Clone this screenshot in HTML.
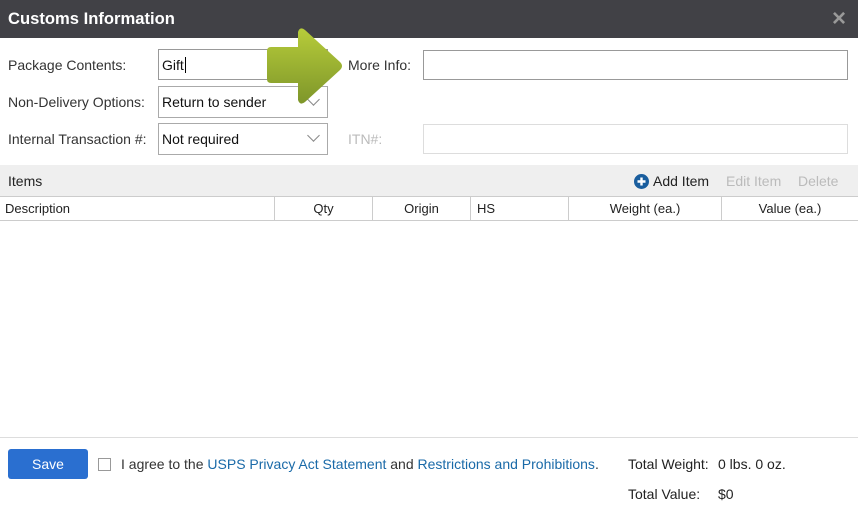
<!DOCTYPE html>
<html><head><style>
body{margin:0;width:858px;height:518px;position:relative;background:#fff;font-family:"Liberation Sans",Arial,sans-serif;font-size:14px;color:#333;overflow:hidden}
.a{position:absolute;white-space:nowrap}
.hdr{left:0;top:0;width:858px;height:38px;background:#414146}
.box{position:absolute;border:1px solid #aaa;box-sizing:border-box;background:#fff}
.lbl{position:absolute;line-height:16px}
.chev{position:absolute;width:8px;height:8px;border-right:1px solid #888;border-bottom:1px solid #888;transform:rotate(45deg)}
.th{position:absolute;top:197px;height:23px;line-height:23px;border-right:1px solid #ccc;box-sizing:border-box;font-size:13px;color:#222}
</style></head><body>
<div class="a hdr"></div>
<div class="a" style="left:8px;top:9px;color:#fff;font-weight:bold;font-size:16.6px">Customs Information</div>
<div class="a" style="left:832px;top:5px;color:#999;font-size:24px;font-weight:bold">×</div>

<div class="lbl" style="left:8px;top:57px">Package Contents:</div>
<div class="box" style="left:158px;top:49px;width:170px;height:31px;border-color:#999"></div>
<div class="lbl" style="left:162px;top:57px;color:#111">Gift<span style="border-left:1px solid #000;margin-left:1px"></span></div>

<div class="lbl" style="left:8px;top:94px">Non-Delivery Options:</div>
<div class="box" style="left:158px;top:86px;width:170px;height:32px"></div>
<div class="lbl" style="left:162px;top:94px;color:#111">Return to sender</div>
<div class="chev" style="left:309px;top:95px"></div>

<div class="lbl" style="left:8px;top:131px">Internal Transaction #:</div>
<div class="box" style="left:158px;top:123px;width:170px;height:32px"></div>
<div class="lbl" style="left:162px;top:131px;color:#111">Not required</div>
<div class="chev" style="left:309px;top:131px"></div>

<svg class="a" style="left:262px;top:26px" width="84" height="82" viewBox="0 0 84 82">
<defs><linearGradient id="g" x1="0" y1="0" x2="0" y2="1"><stop offset="0" stop-color="#b7cc3a"/><stop offset="1" stop-color="#7e962a"/></linearGradient></defs>
<path d="M9 21 L36 21 L36 6 Q38 0 43 4 L78 36 Q82 40 78 44 L43 76 Q38 80 36 74 L36 57 L9 57 Q5 57 5 53 L5 25 Q5 21 9 21 Z" fill="url(#g)"/>
</svg>

<div class="lbl" style="left:348px;top:57px">More Info:</div>
<div class="box" style="left:423px;top:50px;width:425px;height:30px;border-color:#999"></div>
<div class="lbl" style="left:348px;top:131px;color:#bbb">ITN#:</div>
<div class="box" style="left:423px;top:124px;width:425px;height:30px;border-color:#ddd"></div>

<div class="a" style="left:0;top:165px;width:858px;height:32px;background:#efefef;border-bottom:1px solid #ccc;box-sizing:border-box"></div>
<div class="lbl" style="left:8px;top:173px;color:#222">Items</div>
<svg class="a" style="left:634px;top:174px" width="15" height="15" viewBox="0 0 15 15"><circle cx="7.5" cy="7.5" r="7.5" fill="#1a5e9e"/><path d="M7.5 3.5v8M3.5 7.5h8" stroke="#fff" stroke-width="2.4"/></svg>
<div class="lbl" style="left:653px;top:173px;color:#222">Add Item</div>
<div class="lbl" style="left:726px;top:173px;color:#bbb">Edit Item</div>
<div class="lbl" style="left:798px;top:173px;color:#bbb">Delete</div>

<div class="a" style="left:0;top:220px;width:858px;border-top:1px solid #ccc"></div>
<div class="th" style="left:0;width:275px;padding-left:5px">Description</div>
<div class="th" style="left:275px;width:98px;text-align:center">Qty</div>
<div class="th" style="left:373px;width:98px;text-align:center">Origin</div>
<div class="th" style="left:471px;width:98px;padding-left:6px">HS</div>
<div class="th" style="left:569px;width:153px;text-align:center">Weight (ea.)</div>
<div class="th" style="left:722px;width:136px;text-align:center;border-right:none">Value (ea.)</div>

<div class="a" style="left:0;top:437px;width:858px;border-top:1px solid #ddd"></div>
<div class="a" style="left:8px;top:449px;width:80px;height:30px;background:#2a6fd0;border-radius:3px;color:#fff;text-align:center;line-height:30px">Save</div>
<div class="a" style="left:98px;top:458px;width:11px;height:11px;border:1px solid #999"></div>
<div class="lbl" style="left:121px;top:456px">I agree to the <span style="color:#1a6aa8">USPS Privacy Act Statement</span> and <span style="color:#1a6aa8">Restrictions and Prohibitions</span>.</div>
<div class="lbl" style="left:628px;top:456px;color:#222">Total Weight:</div>
<div class="lbl" style="left:718px;top:456px;color:#222">0 lbs. 0 oz.</div>
<div class="lbl" style="left:628px;top:486px;color:#222">Total Value:</div>
<div class="lbl" style="left:718px;top:486px;color:#222">$0</div>
</body></html>
